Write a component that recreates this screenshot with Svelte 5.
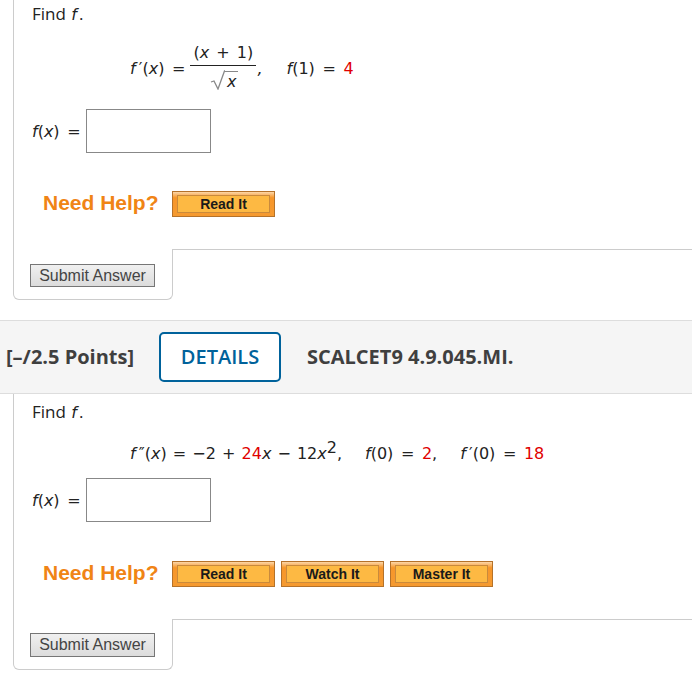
<script>
	const first = ["Read It"];
	const second = ["Read It", "Watch It", "Master It"];
</script>

{#snippet answer(helpers)}
	<div class="answer-row">
		<span class="math label"><i>f</i>(<i>x</i>) =</span>
		<input class="answer" type="text" />
	</div>
	<div class="help-row">
		<span class="need-help">Need Help?</span>
		{#each helpers as label}
			<button class="help-btn"><span>{label}</span></button>
		{/each}
	</div>
{/snippet}

{#snippet submitRow()}
	<div class="foot">
		<div class="foot-cell"><button class="submit">Submit Answer</button></div>
		<div class="foot-line"></div>
	</div>
{/snippet}

<div class="page">
	<section class="question first">
		<div class="body">
			<p class="find">Find <i>f</i>.</p>
			<div class="formula math tall">
				<span class="inline"><i>f</i>&thinsp;′(<i>x</i>) =</span>
				<span class="frac">
					<span class="num">(<i>x</i> + 1)</span>
					<span class="den">
						<svg class="radical" width="15" height="20" viewBox="0 0 15 20">
							<path d="M1 12 L4 11 L8 19 L14.5 1 L15 1" fill="none" stroke="#888" stroke-width="1.3" />
						</svg>
						<i class="under">x</i>
					</span>
				</span>
				<span class="inline comma">,</span>
				<span class="inline after-frac"><i>f</i>(1) = <b>4</b></span>
			</div>
			{@render answer(first)}
		</div>
		{@render submitRow()}
	</section>

	<header class="bar">
		<span class="points">[–/2.5 Points]</span>
		<button class="details">DETAILS</button>
		<span class="code">SCALCET9 4.9.045.MI.</span>
	</header>

	<section class="question second">
		<div class="body">
			<p class="find">Find <i>f</i>.</p>
			<div class="formula math">
				<span class="lead"><i>f</i>&thinsp;″(<i>x</i>) = −2 + <b>24</b><i>x</i> − 12<i>x</i><sup>2</sup>,</span>
				<span class="gap"><i>f</i>(0) = <b>2</b>,</span>
				<span class="gap"><i>f</i>&thinsp;′(0) = <b>18</b></span>
			</div>
			{@render answer(second)}
		</div>
		{@render submitRow()}
	</section>
</div>

<style>
	:global(body) {
		margin: 0;
		background: #fff;
	}

	.page {
		width: 692px;
		height: 682px;
		overflow: hidden;
		font-family: "Open Sans", sans-serif;
		color: #222;
	}

	/* ── Question card ─────────────────────────────── */
	.question {
		margin-left: 13px;
	}

	.body {
		border-left: 1px solid #ccc;
		padding-left: 18px;
		box-sizing: border-box;
	}

	.first .body {
		height: 249px;
		padding-top: 3px;
	}

	.second .body {
		height: 225px;
		padding-top: 7px;
	}

	.find {
		margin: 0;
		font-size: 17px;
		line-height: 22px;
		word-spacing: 1px;
	}

	.find i {
		font-family: "DejaVu Sans", sans-serif;
		font-size: 16px;
		margin-right: 2px;
	}

	.math {
		font-family: "DejaVu Sans", sans-serif;
		font-size: 16px;
		color: #222;
		word-spacing: 2.5px;
	}

	.math b {
		font-weight: normal;
		color: #e00000;
	}

	.formula {
		display: flex;
		align-items: flex-start;
		margin-left: 98px;
		white-space: nowrap;
	}

	.first .formula {
		margin-top: 14px;
		height: 69px;
	}

	.second .formula {
		margin-top: 20px;
		height: 24px;
	}

	.lead {
		word-spacing: 1px;
	}

	.inline {
		padding-top: 19px;
	}

	.frac {
		display: inline-flex;
		flex-direction: column;
		align-items: center;
		width: 66px;
		margin-left: 5px;
	}

	.num {
		height: 25px;
		line-height: 25px;
		width: 100%;
		text-align: center;
		border-bottom: 1px solid #222;
		word-spacing: 2px;
	}

	.den {
		display: flex;
		height: 24px;
		padding-top: 4px;
		box-sizing: border-box;
		margin-left: 1px;
	}

	.radical {
		display: block;
	}

	.under {
		border-top: 1px solid #888;
		height: 19px;
		line-height: 19px;
		width: 13px;
		padding-left: 2px;
		box-sizing: border-box;
		margin-top: 1px;
	}

	.comma {
		margin-left: 1px;
		font-style: italic;
	}

	.after-frac {
		margin-left: 24px;
	}

	sup {
		font-size: 16px;
		line-height: 0;
		vertical-align: 6px;
	}

	.gap {
		margin-left: 23px;
	}

	/* ── Answer ─────────────────────────────────────── */
	.answer-row {
		display: flex;
		align-items: center;
		gap: 6px;
	}

	.label {
		width: 48px;
		white-space: nowrap;
	}

	.second .answer-row {
		margin-top: 10px;
	}

	.answer {
		width: 125px;
		height: 44px;
		box-sizing: border-box;
		border: 1px solid #888;
		background: #fff;
		padding: 0;
		margin: 0;
	}

	/* ── Need help ──────────────────────────────────── */
	.help-row {
		display: flex;
		align-items: center;
		gap: 6px;
		margin: 38px 0 0 11px;
	}

	.second .help-row {
		margin-top: 39px;
	}

	.need-help {
		font-family: "Liberation Sans", sans-serif;
		font-size: 21px;
		font-weight: bold;
		color: #f08415;
		width: 123px;
		white-space: nowrap;
		padding-bottom: 2px;
	}

	.help-btn {
		height: 26px;
		width: 103px;
		padding: 3px 4px 3px;
		box-sizing: border-box;
		border: 1px solid #b5722a;
		background: linear-gradient(#fcd7a8, #f7962a 24%, #f59a30);
		font-family: "Liberation Sans", sans-serif;
		font-size: 14px;
		font-weight: bold;
		color: #1a1a1a;
		display: flex;
		cursor: pointer;
	}

	.help-btn span {
		flex: 1;
		display: flex;
		align-items: center;
		justify-content: center;
		background: #fdb943;
		border: 1px solid #c98a3c;
	}

	/* ── Submit ─────────────────────────────────────── */
	.foot {
		display: flex;
		align-items: flex-start;
	}

	.foot-cell {
		width: 160px;
		height: 51px;
		box-sizing: border-box;
		border: 1px solid #ccc;
		border-top: none;
		border-radius: 0 0 6px 6px;
		padding: 15px 0 0 16px;
	}

	.second .foot-cell {
		padding-top: 14px;
	}

	.second .submit {
		height: 24px;
	}

	.foot-line {
		flex: 1;
		border-top: 1px solid #ccc;
		margin-left: -1px;
	}

	.submit {
		display: block;
		width: 125px;
		height: 23px;
		padding: 0;
		box-sizing: border-box;
		border: 1px solid #767676;
		background: linear-gradient(#f0f0f0, #dcdcdc);
		font-family: "Liberation Sans", sans-serif;
		font-size: 16px;
		color: #444;
		cursor: pointer;
	}

	/* ── Header bar ─────────────────────────────────── */
	.bar {
		display: flex;
		align-items: center;
		height: 74px;
		margin-top: 20px;
		box-sizing: border-box;
		background: #f5f5f5;
		border-top: 1px solid #ddd;
		border-bottom: 1px solid #ddd;
		padding-left: 6px;
		color: #3f3f3f;
		font-weight: 700;
		font-size: 20px;
	}

	.points {
		width: 153px;
		white-space: nowrap;
		padding-bottom: 2px;
	}

	.details {
		width: 122px;
		height: 50px;
		box-sizing: border-box;
		border: 2px solid #00629b;
		border-radius: 5px;
		background: #fff;
		color: #00629b;
		font-family: "Open Sans", sans-serif;
		font-size: 20px;
		font-weight: 600;
		padding: 0 0 2px;
		cursor: pointer;
	}

	.code {
		margin-left: 26px;
		padding-bottom: 2px;
	}
</style>
